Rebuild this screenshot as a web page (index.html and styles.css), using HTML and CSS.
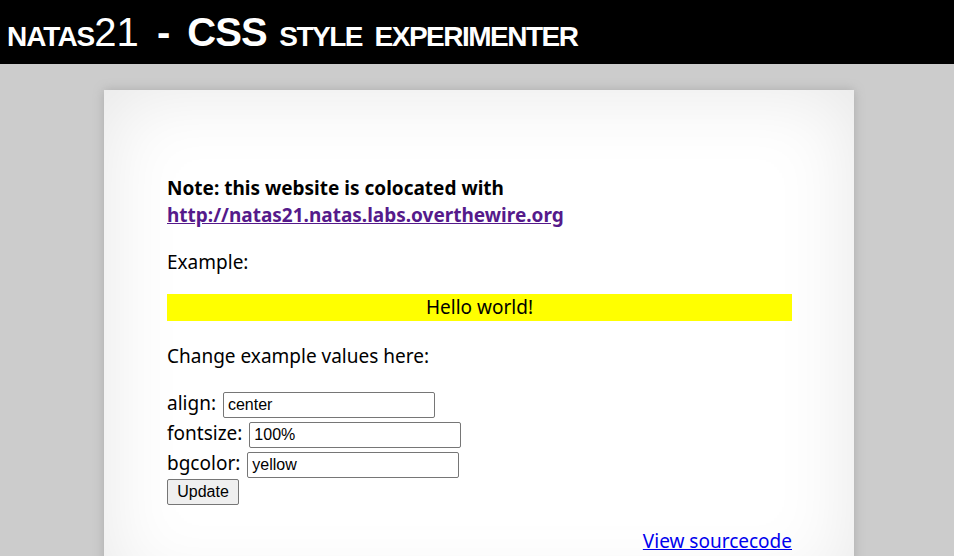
FILE: index.html
```
<!DOCTYPE html>
<html>
<head>
<meta charset="utf-8">
<title>natas21</title>
<link rel="stylesheet" href="styles.css">
</head>
<body>
<h1 class="title">natas<span class="num">21</span> - CSS<span class="sub"> style experimenter</span></h1>
<div class="content">
<p class="note"><b>Note: this website is colocated with <a class="visited" href="#">http://natas21.natas.labs.overthewire.org</a></b></p>
<p class="para para-example">Example:</p>
<div class="example">Hello world!</div>
<p class="para para-change">Change example values here:</p>
<form class="form">
<div class="row">align: <input class="field field-align" type="text" value="center"></div>
<div class="row">fontsize: <input class="field" type="text" value="100%"></div>
<div class="row">bgcolor: <input class="field" type="text" value="yellow"></div>
<div class="btnrow"><button class="btn" type="button">Update</button></div>
</form>
<div class="viewsource"><a class="link" href="#">View sourcecode</a></div>
</div>
</body>
</html>
```
FILE: styles.css
```
html, body {
  margin: 0;
  padding: 0;
}
body {
  background: #cccccc;
  font-family: "Noto Sans", sans-serif;
  font-size: 19px;
  line-height: 27px;
  color: #000;
  overflow: hidden;
}
.title {
  margin: 0;
  height: 64px;
  background: #000;
  color: #fff;
  font-family: "Liberation Sans", sans-serif;
  font-variant: small-caps;
  font-size: 40px;
  line-height: 64px;
  font-weight: bold;
  letter-spacing: -1px;
  word-spacing: 8px;
  padding: 0 0 0 7px;
  white-space: nowrap;
}
.num {
  font-weight: normal;
  letter-spacing: 0;
}
.sub {
  letter-spacing: -1.5px;
  word-spacing: 3px;
}
.content {
  width: 750px;
  box-sizing: border-box;
  margin: 26px 0 0 104px;
  padding: 85px 62px 40px 63px;
  background: #fff;
  box-shadow: 0 0 10px #aaaaaa, inset 0 0 80px #e6e6e6;
}
.note {
  margin: 0 0 20px;
}
.para-example {
  margin: 0 0 18px;
}
.para-change {
  margin: 22px 0 18px;
}
.visited {
  color: #551a8b;
}
.example {
  background: yellow;
  text-align: center;
}
.form {
  margin: 0;
}
.row {
  height: 30px;
  line-height: 30px;
}
.field {
  margin: 0 0 0 2px;
  vertical-align: middle;
  width: 212px;
  height: 26px;
  box-sizing: border-box;
  border: 1px solid #767676;
  border-radius: 2px;
  font-family: "Liberation Sans", Arial, sans-serif;
  font-size: 16px;
  padding: 1px 4px;
}
.btnrow {
  padding-top: 1px;
  height: 26px;
}
.btn {
  display: block;
  width: 72px;
  height: 26px;
  box-sizing: border-box;
  background: #efefef;
  border: 1px solid #767676;
  border-radius: 2px;
  font-family: "Liberation Sans", Arial, sans-serif;
  font-size: 16px;
  padding: 0;
  margin: 0;
}
.viewsource {
  text-align: right;
  margin-top: 23px;
}
.link {
  color: #0000ee;
}
```
